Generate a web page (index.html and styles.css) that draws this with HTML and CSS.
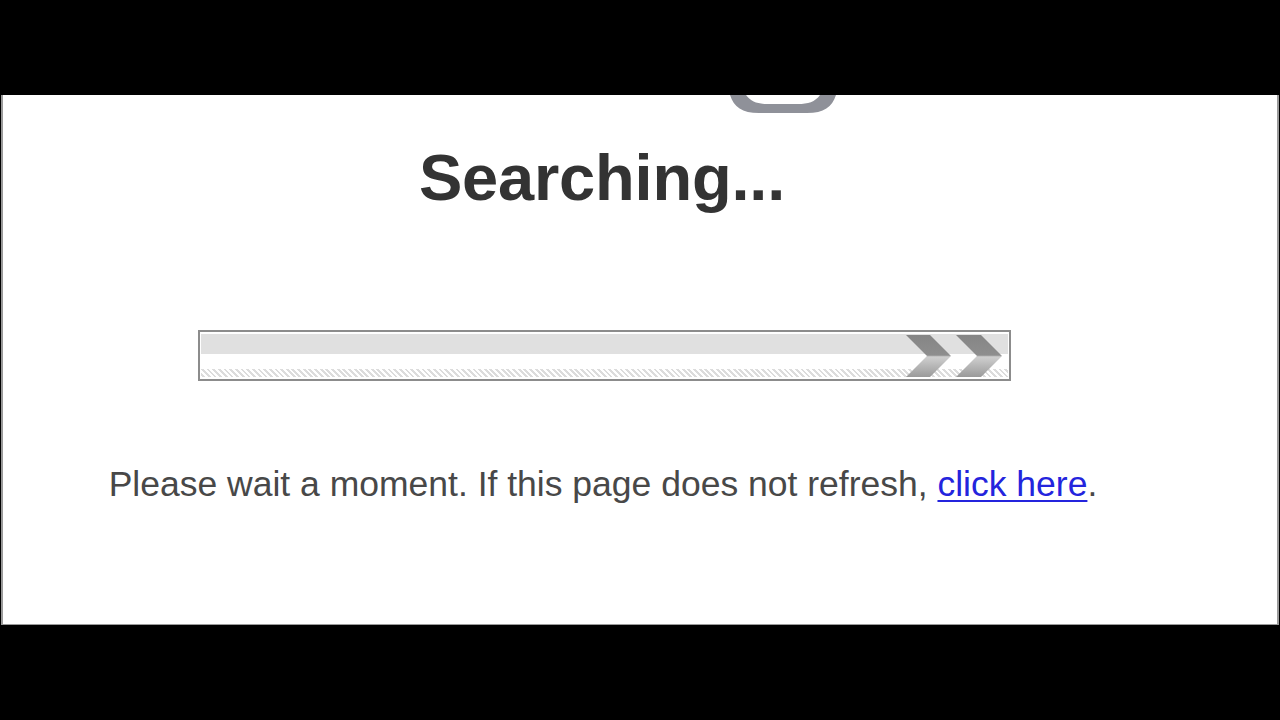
FILE: index.html
```html
<!DOCTYPE html>
<html>
<head>
<meta charset="utf-8">
<link rel="stylesheet" href="styles.css">
</head>
<body>
<div class="screen">
  <div class="band"></div>
  <div class="panel">
    <div class="column">
      <svg class="logo-tail" width="108" height="20" viewBox="0 0 108 20">
        <path fill="#8f9199" fill-rule="evenodd" d="M1 0 C5 12 13 18 30 18 L78 18 C95 18 103 12 107 0 Z M17 0 C22 7 29 9 39 9 L69 9 C79 9 86 7 91 0 Z"/>
      </svg>
      <h1 class="title">Searching...</h1>
      <div class="bar">
        <svg class="chevrons" width="107" height="47" viewBox="0 0 107 47">
          <defs>
            <linearGradient id="cg" x1="0" y1="0" x2="0" y2="1">
              <stop offset="0" stop-color="#858585"/>
              <stop offset="0.48" stop-color="#8e8e8e"/>
              <stop offset="0.52" stop-color="#cfcfcf"/>
              <stop offset="1" stop-color="#9a9a9a"/>
            </linearGradient>
          </defs>
          <polygon fill="url(#cg)" points="4,3 28,3 49,24 28,45 4,45 25,24"/>
          <polygon fill="url(#cg)" points="54,3 79,3 100,24 79,45 54,45 75,24"/>
        </svg>
      </div>
      <p class="message">Please wait a moment. If this page does not refresh, <a class="link" href="#">click here</a>.</p>
    </div>
  </div>
  <div class="band"></div>
</div>
</body>
</html>
```
FILE: styles.css
```css
html, body {
  margin: 0;
  padding: 0;
  background: #000;
}
.screen {
  width: 1280px;
  height: 720px;
  display: flex;
  flex-direction: column;
  overflow: hidden;
}
.band {
  height: 95px;
  background: #000;
  flex: none;
}
.panel {
  height: 530px;
  flex: none;
  background: #fff;
  box-sizing: border-box;
  border-left: 2px solid #9a9a9a;
  border-right: 2px solid #9a9a9a;
  border-bottom: 1px solid #9a9a9a;
  margin: 0 1px;
}
.column {
  width: 1200px;
  display: flex;
  flex-direction: column;
  align-items: center;
}
.logo-tail {
  display: block;
  align-self: flex-start;
  margin-left: 726px;
}
.title {
  margin: 30px 2px 0 0;
  font-family: "Liberation Sans", Arial, sans-serif;
  font-weight: bold;
  font-size: 65px;
  line-height: 65px;
  color: #333;
  letter-spacing: -0.2px;
}
.bar {
  margin: 120px 0 0 2px;
  width: 813px;
  height: 51px;
  box-sizing: border-box;
  border: 2px solid #8c8c8c;
  display: flex;
  justify-content: flex-end;
  background:
    linear-gradient(#fff, #fff) 0 0 / 100% 2px no-repeat,
    linear-gradient(#e0e0e0, #e0e0e0) 0 2px / 100% 20px no-repeat,
    repeating-linear-gradient(45deg, #fff 0 2px, #dcdcdc 2px 4px) 0 37px / 100% 8px no-repeat,
    #fff;
  box-shadow: inset 0 0 0 1px #fff;
}
.chevrons {
  display: block;
}
.message {
  margin: 86px 0 0 0;
  font-family: "Liberation Sans", Arial, sans-serif;
  font-size: 35.5px;
  line-height: 35px;
  color: #484848;
  white-space: nowrap;
}
.link {
  color: #2424dd;
  text-decoration: underline;
  text-decoration-thickness: 2px;
  text-underline-offset: 4px;
}
```
